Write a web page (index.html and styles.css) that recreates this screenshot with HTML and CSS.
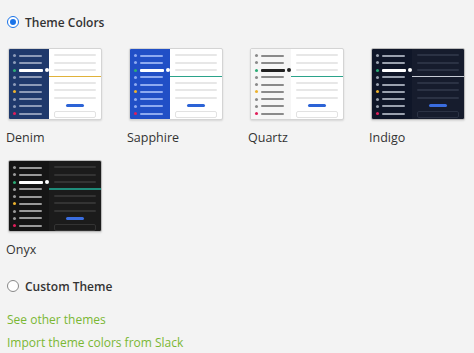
FILE: index.html
```html
<!DOCTYPE html>
<html lang="en">
<head>
    <meta charset="UTF-8">
    <title>Theme Colors</title>
    <link rel="stylesheet" href="styles.css">
</head>
<body>
    <!-- Theme picker -->
    <div class="option checked">
        <span class="radio"></span>
        <span class="option-label">Theme Colors</span>
    </div>

    <div class="themes" id="themes"></div>

    <div class="option custom">
        <span class="radio"></span>
        <span class="option-label">Custom Theme</span>
    </div>

    <div class="links">
        <a href="#">See other themes</a>
        <a href="#">Import theme colors from Slack</a>
    </div>

    <script>
        const themes = ['Denim', 'Sapphire', 'Quartz', 'Indigo', 'Onyx'];
        const grid = document.getElementById('themes');

        // Build a little preview for each theme
        function buildThumb(name) {
            let rows = '';
            for (let i = 0; i < 9; i++) {
                const cls = i === 2 ? 'row active' : 'row';
                let dot = 'dot';
                if (i === 2) dot += ' green';
                if (i === 5) dot += ' yellow';
                if (i === 8) dot += ' red';
                rows += `<div class="${cls}"><span class="${dot}"></span><span class="bar"></span></div>`;
            }
            return `
                <div class="theme">
                    <div class="thumb ${name.toLowerCase()}">
                        <div class="side">${rows}</div>
                        <div class="main">
                            <span class="line"></span>
                            <span class="line"></span>
                            <span class="line"></span>
                            <span class="divider"></span>
                            <span class="line"></span>
                            <span class="line"></span>
                            <span class="line"></span>
                            <span class="button"></span>
                            <span class="input"></span>
                        </div>
                    </div>
                    <div class="theme-name">${name}</div>
                </div>`;
        }

        grid.innerHTML = themes.map(buildThumb).join('');
    </script>
</body>
</html>
```

FILE: styles.css
```css
body {
    margin: 0;
    padding: 13px 7px 0 7px;
    background-color: #f3f3f3;
    font-family: 'Open Sans', 'Liberation Sans', sans-serif;
    font-size: 12px;
    color: #333;
}

/* Radio options */
.option {
    display: flex;
    align-items: center;
    height: 18px;
}

.option-label {
    font-weight: 600;
    font-size: 12px;
    margin-left: 6px;
}

.radio {
    box-sizing: border-box;
    width: 12px;
    height: 12px;
    border-radius: 50%;
    border: 1px solid #888;
    background: #fff;
    position: relative;
}

.option.checked .radio {
    border-color: #1a73e8;
}

.option.checked .radio::after {
    content: '';
    position: absolute;
    left: 2px;
    top: 2px;
    width: 6px;
    height: 6px;
    border-radius: 50%;
    background: #1a73e8;
}

.option.custom {
    margin-top: 18px;
}

/* Theme grid */
.themes {
    display: grid;
    grid-template-columns: repeat(4, 94px);
    column-gap: 27px;
    row-gap: 13px;
    margin-top: 17px;
}

.theme-name {
    margin-top: 9px;
    line-height: 18px;
    font-size: 12.5px;
    margin-left: -1px;
}

.thumb {
    display: flex;
    width: 94px;
    height: 72px;
    box-sizing: border-box;
    border: 1px solid #d4d4d4;
    border-radius: 2px;
    overflow: hidden;
    margin-left: 1px;
    box-shadow: 0 1px 2px rgba(0, 0, 0, 0.12);
    background: #fff;
}

.side {
    width: 40px;
    box-sizing: border-box;
    padding: 5px 0 4px 4px;
    display: flex;
    flex-direction: column;
    justify-content: space-between;
}

.row {
    display: flex;
    align-items: center;
    height: 3px;
}

.dot {
    width: 3px;
    height: 3px;
    border-radius: 50%;
    background: #8d9bb8;
}

.dot.green { background: #2bac76; }
.dot.yellow { background: #ecb22e; }
.dot.red { background: #e01e5a; }

.bar {
    width: 23px;
    height: 2px;
    margin-left: 3px;
    border-radius: 1px;
    background: #8d9bb8;
}

.row.active .bar {
    height: 3px;
    width: 24px;
    background: #fff;
}

.row.active::after {
    content: '';
    width: 4px;
    height: 4px;
    margin-left: 2px;
    border-radius: 50%;
    background: #fff;
}

.main {
    flex: 1;
    display: flex;
    flex-direction: column;
    padding: 5px 5px 0 5px;
}

.line {
    height: 2px;
    margin-bottom: 5.5px;
    border-radius: 1px;
    background: #e7e7e7;
}

.divider {
    height: 1px;
    margin: -1px -5px 5px -5px;
    background: #2ba38a;
}

.button {
    width: 18px;
    height: 3px;
    border-radius: 2px;
    margin: 0 auto 4px auto;
    background: #2c63d6;
}

.input {
    height: 5px;
    border: 1px solid #e2e2e2;
    border-radius: 2px;
}

/* Theme colours */
.denim .side { background: #1f396c; }
.denim .divider { background: #e0b23a; }

.sapphire .side { background: #214fc6; }
.sapphire .bar, .sapphire .dot { background: #8eaaf0; }

.quartz .side { background: #f6f6f6; }
.quartz .bar, .quartz .dot { background: #8a8a8a; }
.quartz .row.active .bar,
.quartz .row.active::after { background: #222; }

.quartz .dot.green, .sapphire .dot.green { background: #2bac76; }
.quartz .dot.yellow, .sapphire .dot.yellow { background: #ecb22e; }
.quartz .dot.red, .sapphire .dot.red { background: #e01e5a; }

.indigo { border-color: #bbb; }
.indigo .side { background: #0f1628; }
.indigo .main { background: #161c2d; }
.indigo .line { background: #2b3244; }
.indigo .divider { background: #c7ccd6; }
.indigo .bar, .indigo .dot { background: #9aa1ae; }
.indigo .button { background: #3a6de0; }
.indigo .input { border-color: #2b3244; }

.onyx { border-color: #bbb; }
.onyx .side { background: #151515; }
.onyx .main { background: #1b1b1b; }
.onyx .line { background: #333; }
.onyx .divider { background: #1f8c7a; height: 2px; }
.onyx .bar, .onyx .dot { background: #9a9a9a; }
.onyx .button { background: #3a6de0; }
.onyx .input { border-color: #333; }

.indigo .dot.green, .onyx .dot.green { background: #2bac76; }
.indigo .dot.yellow, .onyx .dot.yellow { background: #ecb22e; }
.indigo .dot.red, .onyx .dot.red { background: #e01e5a; }

/* Links */
.links {
    display: flex;
    flex-direction: column;
    margin-top: 16px;
    gap: 5px;
}

.links a {
    color: #7ab733;
    text-decoration: none;
    line-height: 18px;
}
```
